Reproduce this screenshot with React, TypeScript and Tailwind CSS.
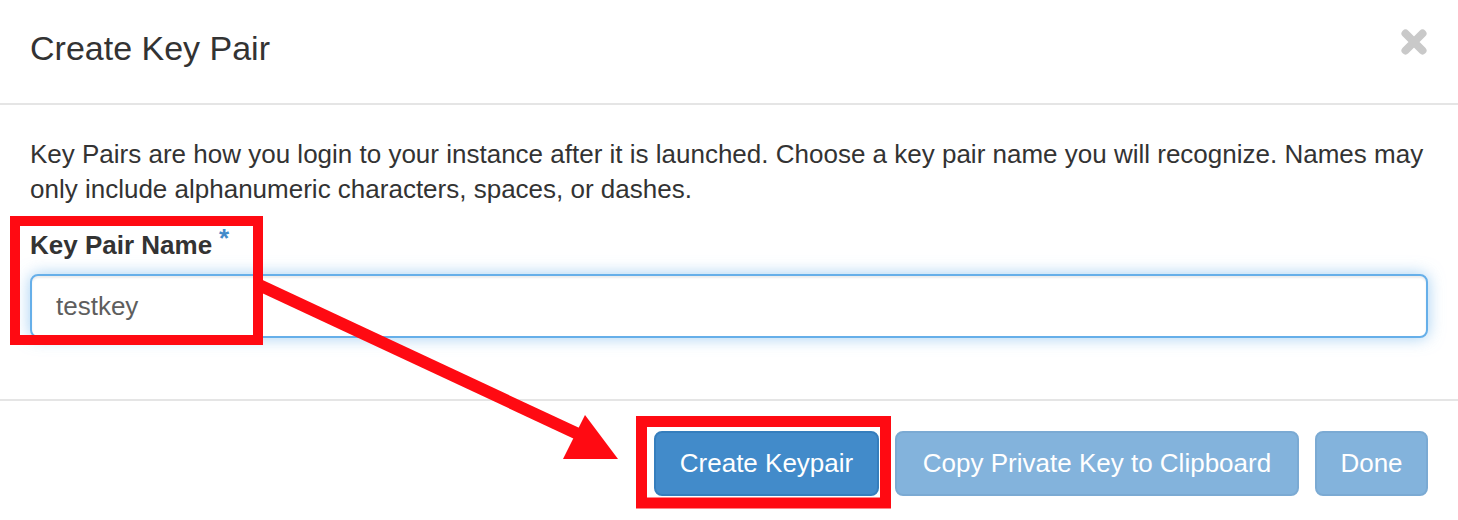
import React from "react";

export default function App() {
  return (
    <div
      className="relative w-[1458px] h-[520px] overflow-hidden bg-white text-[#333]"
      style={{ fontFamily: '"Liberation Sans", Arial, sans-serif' }}
    >
      {/* Header */}
      <div className="flex h-[105px] items-center justify-between border-b-2 border-[#e5e5e5] pl-[30px] pr-[31px]">
        <h4 className="mt-[-8px] text-[34px] leading-[40px] font-normal text-[#333]">Create Key Pair</h4>
        <button className="mt-[-20px] flex h-[26px] w-[26px] items-center justify-center" aria-label="Close">
          <svg width="26" height="26" viewBox="0 0 26 26">
            <path d="M4.5 4.5 L21.5 21.5 M21.5 4.5 L4.5 21.5" stroke="#c9c9c9" strokeWidth="8" strokeLinecap="round" />
          </svg>
        </button>
      </div>

      {/* Body */}
      <div className="px-[30px] pt-[32px]">
        <p className="text-[26px] leading-[35px] text-[#333]">
          Key Pairs are how you login to your instance after it is launched. Choose a key pair name you will recognize. Names may only include alphanumeric characters, spaces, or dashes.
        </p>
        <div className="mt-[20px]">
          <label className="flex items-start text-[26px] leading-[36px] font-bold text-[#333]">
            Key Pair Name
            <span className="ml-[7px] mt-[-2px] text-[26px] leading-[26px] font-bold text-[#428bca]">*</span>
          </label>
          <div className="mt-[11px] flex h-[64px] items-center rounded-[8px] border-2 border-[#66afe9] bg-white px-[24px] shadow-[inset_0_2px_2px_rgba(0,0,0,0.075),0_0_16px_rgba(102,175,233,0.6)]">
            <span className="text-[26px] text-[#5e5e5e]">testkey</span>
          </div>
        </div>
      </div>

      {/* Footer */}
      <div className="mt-[61px] flex justify-end gap-[16px] border-t-2 border-[#e5e5e5] px-[30px] pt-[30px]">
        <button className="h-[65px] w-[225px] rounded-[8px] border-2 border-[#357ebd] bg-[#428bca] text-[26px] text-white">
          Create Keypair
        </button>
        <button className="h-[65px] w-[404px] rounded-[8px] border-2 border-[#357ebd] bg-[#428bca] text-[26px] text-white opacity-65">
          Copy Private Key to Clipboard
        </button>
        <button className="h-[65px] w-[113px] rounded-[8px] border-2 border-[#357ebd] bg-[#428bca] text-[26px] text-white opacity-65">
          Done
        </button>
      </div>

      {/* Red annotations */}
      <svg className="pointer-events-none absolute left-0 top-0" width="1458" height="520" viewBox="0 0 1458 520">
        <rect x="15" y="221" width="243" height="119" fill="none" stroke="#ff0a12" strokeWidth="10" />
        <rect x="641.5" y="421.5" width="244" height="81.5" fill="none" stroke="#ff0a12" strokeWidth="11" />
        <line x1="258" y1="284.5" x2="578" y2="434" stroke="#ff0a12" strokeWidth="12" />
        <polygon points="585,415 563,459 618,459" fill="#ff0a12" />
      </svg>
    </div>
  );
}
